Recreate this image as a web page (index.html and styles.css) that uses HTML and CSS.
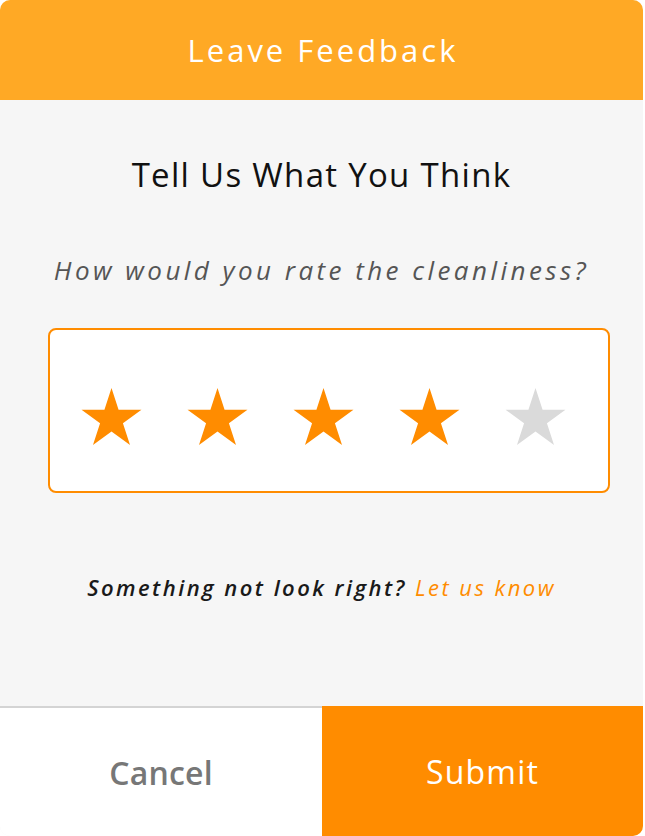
FILE: index.html
```html
<!DOCTYPE html>
<html lang="en">
<head>
<meta charset="utf-8">
<title>Leave Feedback</title>
<link rel="stylesheet" href="styles.css">
</head>
<body>
<div class="card">
  <header class="card-header">Leave Feedback</header>
  <main class="card-body">
    <h1 class="title">Tell Us What You Think</h1>
    <p class="question">How would you rate the cleanliness?</p>
    <div class="rating">
      <svg class="star on" viewBox="0 0 63 57"><polygon points="31.5,0 38.57,21.77 61.46,21.77 42.93,35.22 50.02,56.98 31.5,43.53 12.98,56.98 20.07,35.22 1.54,21.77 24.43,21.77"/></svg>
      <svg class="star on" viewBox="0 0 63 57"><polygon points="31.5,0 38.57,21.77 61.46,21.77 42.93,35.22 50.02,56.98 31.5,43.53 12.98,56.98 20.07,35.22 1.54,21.77 24.43,21.77"/></svg>
      <svg class="star on" viewBox="0 0 63 57"><polygon points="31.5,0 38.57,21.77 61.46,21.77 42.93,35.22 50.02,56.98 31.5,43.53 12.98,56.98 20.07,35.22 1.54,21.77 24.43,21.77"/></svg>
      <svg class="star on" viewBox="0 0 63 57"><polygon points="31.5,0 38.57,21.77 61.46,21.77 42.93,35.22 50.02,56.98 31.5,43.53 12.98,56.98 20.07,35.22 1.54,21.77 24.43,21.77"/></svg>
      <svg class="star off" viewBox="0 0 63 57"><polygon points="31.5,0 38.57,21.77 61.46,21.77 42.93,35.22 50.02,56.98 31.5,43.53 12.98,56.98 20.07,35.22 1.54,21.77 24.43,21.77"/></svg>
    </div>
    <p class="report">Something not look right? <a class="report-link" href="#">Let us know</a></p>
  </main>
  <footer class="card-footer">
    <button class="btn btn-cancel" type="button">Cancel</button>
    <button class="btn btn-submit" type="button">Submit</button>
  </footer>
</div>
</body>
</html>
```

FILE: styles.css
```css
html, body {
  margin: 0;
  padding: 0;
  background: #ffffff;
}

body {
  font-family: "Open Sans", "DejaVu Sans", sans-serif;
}

.card {
  width: 643px;
  height: 836px;
  border-radius: 10px;
  overflow: hidden;
  display: flex;
  flex-direction: column;
  background: #f6f6f6;
}

.card-header {
  height: 100px;
  flex: none;
  background: #ffa925;
  color: #ffffff;
  display: flex;
  align-items: center;
  justify-content: center;
  font-size: 31px;
  letter-spacing: 3px;
  font-weight: 400;
  padding-left: 3px;
}

.card-body {
  flex: 1;
  display: flex;
  flex-direction: column;
  align-items: center;
}

.title {
  margin: 55px 0 0;
  font-size: 33px;
  line-height: 40px;
  font-weight: 400;
  color: #111111;
  letter-spacing: 1.3px;
}

.question {
  margin: 60px 0 0;
  font-size: 26px;
  line-height: 30px;
  font-style: italic;
  color: #555555;
  letter-spacing: 3.45px;
}

.rating {
  margin: 43px 0 0 15px;
  width: 528.5px;
  height: 150px;
  border: 2px solid #ff8c00;
  border-radius: 8px;
  background: #ffffff;
  display: flex;
  align-items: center;
  gap: 43px;
  padding: 11px 0 0 29.5px;
}

.star {
  width: 63px;
  height: 57px;
  flex: none;
}

.star.on { fill: #ff8c00; }
.star.off { fill: #dadada; }

.report {
  margin: 79px 0 0;
  font-size: 22px;
  line-height: 30px;
  font-style: italic;
  font-weight: 600;
  color: #1a1a1a;
  letter-spacing: 2.45px;
}

.report-link {
  color: #ff8c00;
  text-decoration: none;
  font-weight: 500;
}

.card-footer {
  height: 130px;
  flex: none;
  display: flex;
}

.btn {
  border: none;
  margin: 0;
  padding: 0;
  font-family: inherit;
  font-size: 32px;
  cursor: pointer;
}

.btn-cancel {
  width: 322px;
  background: #ffffff;
  color: #777777;
  font-weight: 600;
  letter-spacing: 0.2px;
  border-top: 2px solid #d4d4d4;
}

.btn-submit {
  flex: 1;
  background: #ff8c00;
  color: #ffffff;
  font-weight: 400;
  letter-spacing: 1.2px;
}
```
